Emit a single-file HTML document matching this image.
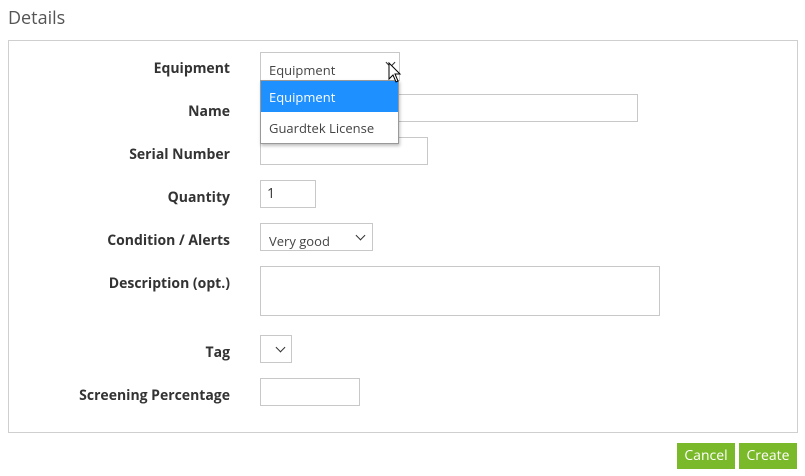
<!DOCTYPE html>
<html><head><style>
body{margin:0;width:805px;height:476px;background:#fff;font-family:"Open Sans","Liberation Sans",sans-serif;position:relative;overflow:hidden;color:#333}
.a{position:absolute}
.lbl{position:absolute;right:575px;font-weight:bold;font-size:14px;color:#333;white-space:nowrap;line-height:18px}
.box{position:absolute;border:1px solid #c8c8c8;background:#fff;box-sizing:border-box;font-size:13px;color:#444;padding-left:8px}
.chev{position:absolute;width:6px;height:6px;border-right:1.6px solid #333;border-bottom:1.6px solid #333;transform:rotate(45deg)}
.btn{position:absolute;background:#7ab929;color:#fff;font-size:14px;text-align:center;line-height:26px;height:26px;top:443px}
</style></head><body>
<div class="a" style="left:8px;top:6px;font-size:18px;color:#555">Details</div>
<div class="a" style="left:8px;top:40px;width:788px;height:391px;border:1px solid #cfcfcf"></div>

<div class="lbl" style="top:60px">Equipment</div>
<div class="lbl" style="top:103px">Name</div>
<div class="lbl" style="top:146px">Serial Number</div>
<div class="lbl" style="top:189px">Quantity</div>
<div class="lbl" style="top:232px">Condition / Alerts</div>
<div class="lbl" style="top:275px">Description (opt.)</div>
<div class="lbl" style="top:344px">Tag</div>
<div class="lbl" style="top:387px">Screening Percentage</div>

<div class="box" style="left:260px;top:94px;width:378px;height:28px"></div>
<div class="box" style="left:260px;top:137px;width:168px;height:28px"></div>
<div class="box" style="left:260px;top:180px;width:56px;height:28px;line-height:26px;padding-left:6px;font-size:14px;color:#333">1</div>
<div class="box" style="left:260px;top:223px;width:113px;height:28px;line-height:34px">Very good<div class="chev" style="left:96px;top:8px"></div></div>
<div class="box" style="left:260px;top:266px;width:400px;height:50px"></div>
<div class="box" style="left:260px;top:335px;width:32px;height:28px"><div class="chev" style="left:16px;top:8px"></div></div>
<div class="box" style="left:260px;top:378px;width:100px;height:28px"></div>

<div class="box" style="left:260px;top:52px;width:140px;height:29px;line-height:34px">Equipment<div class="chev" style="left:126px;top:6px"></div></div>
<div class="a" style="left:260px;top:80px;width:139px;height:64px;border:1px solid #999;box-sizing:border-box;background:#fff;box-shadow:1px 2px 3px rgba(0,0,0,.25);font-size:13px">
<div style="background:#1e90ff;color:#fff;height:31px;line-height:32px;padding-left:8px">Equipment</div>
<div style="color:#444;height:31px;line-height:33px;padding-left:8px">Guardtek License</div>
</div>
<svg class="a" style="left:388px;top:62px" width="14" height="22" viewBox="0 0 14 22"><path d="M1 1 L1 17 L5 13 L8 20 L10 19 L7 12 L12 12 Z" fill="#fff" stroke="#000" stroke-width="1"/></svg>

<div class="btn" style="left:677px;width:58px">Cancel</div>
<div class="btn" style="left:739px;width:58px">Create</div>
</body></html>
